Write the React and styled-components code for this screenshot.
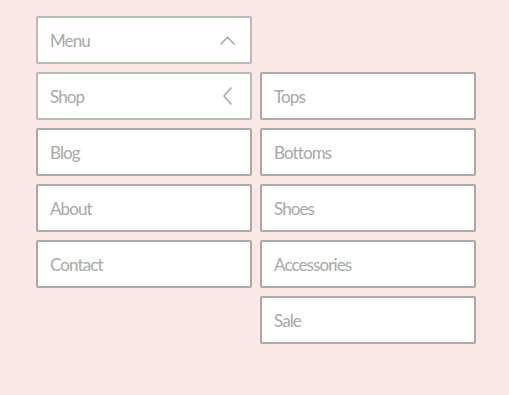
import React from "react";
import styled, { createGlobalStyle } from "styled-components";

const GlobalStyle = createGlobalStyle`
  body {
    margin: 0;
    background: #fbe8e6;
    font-family: Lato, "Open Sans", sans-serif;
  }
`;

const Page = styled.div`
  padding: 16px 0 16px 36px;
  display: flex;
  gap: 8px;
  align-items: flex-start;
`;

const Column = styled.div`
  display: flex;
  flex-direction: column;
  gap: 8px;
  width: 216px;
  flex-shrink: 0;
  margin-top: ${(p) => (p.$offset ? "56px" : "0")};
`;

const Item = styled.div`
  box-sizing: border-box;
  height: 48px;
  display: flex;
  align-items: center;
  justify-content: space-between;
  padding: 0 15px 0 12px;
  background: #ffffff;
  border: 2px solid ${(p) => (p.$active ? "#b0c1ad" : "#a7aca5")};
  border-radius: 2px;
  color: #a6aaa4;
  font-size: 17px;
  letter-spacing: -0.9px;
  cursor: pointer;
`;

const Chevron = styled.svg`
  display: block;
  fill: none;
  stroke: #a6aaa4;
  stroke-width: 1.6;
  stroke-linecap: round;
  stroke-linejoin: round;
`;

const ChevronUp = () => (
  <Chevron width="15" height="9" viewBox="0 0 15 9">
    <path d="M1 8 L7.5 1.2 L14 8" />
  </Chevron>
);

const ChevronLeft = () => (
  <Chevron width="9" height="18" viewBox="0 0 9 18" style={{ marginRight: 3 }}>
    <path d="M8 1 L1 9 L8 17" />
  </Chevron>
);

const navItems = ["Blog", "About", "Contact"];
const shopItems = ["Tops", "Bottoms", "Shoes", "Accessories", "Sale"];

export default function App() {
  return (
    <>
      <GlobalStyle />
      <Page>
        <Column>
          <Item $active>
            Menu
            <ChevronUp />
          </Item>
          <Item $active>
            Shop
            <ChevronLeft />
          </Item>
          {navItems.map((label) => (
            <Item key={label}>{label}</Item>
          ))}
        </Column>
        <Column $offset>
          {shopItems.map((label) => (
            <Item key={label}>{label}</Item>
          ))}
        </Column>
      </Page>
    </>
  );
}
